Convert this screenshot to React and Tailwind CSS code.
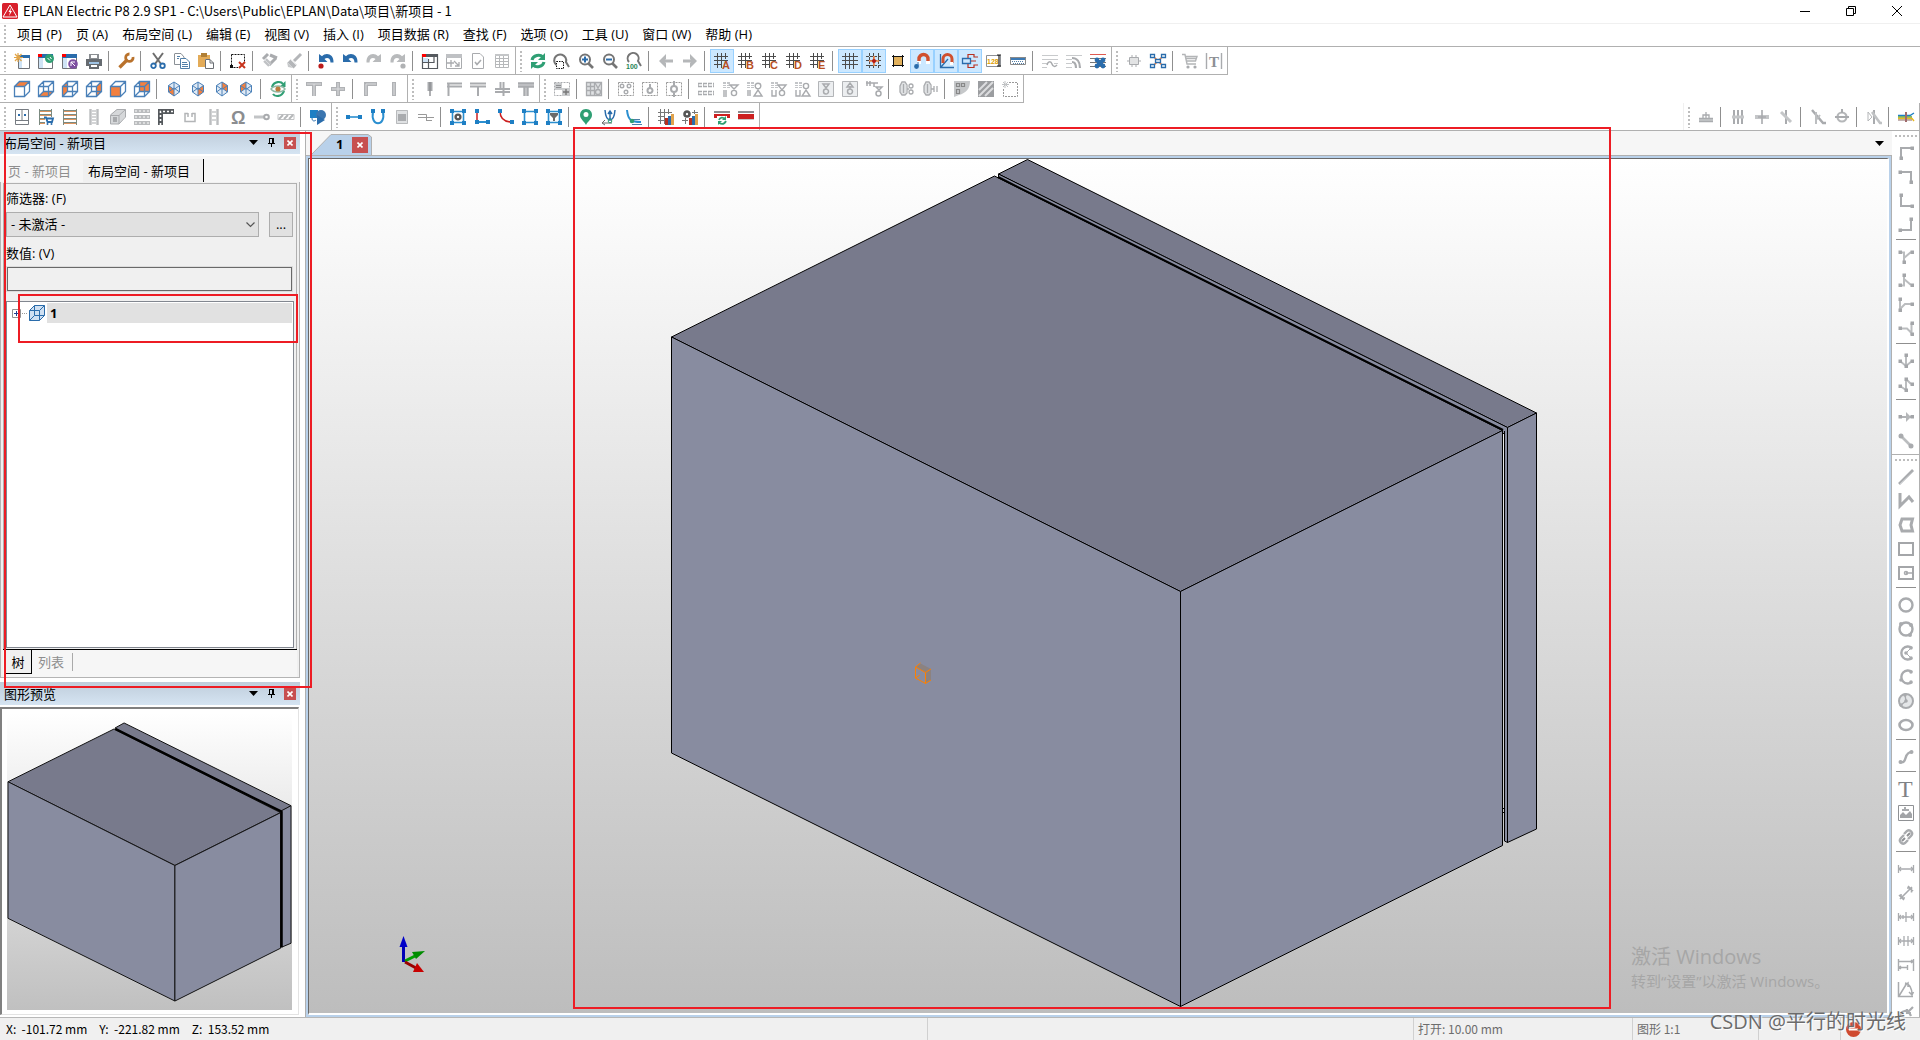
import React from 'react';

const GRAY = '#a9abae';
const DARK = '#6f7277';
const BLUE = '#2a6cab';
const SKY = '#1e7fc4';
const WIRE = '#4a80b8';
const ORANGE = '#f3803f';
const RED = '#cc2020';
const GREEN = '#2f9f74';
const RUST = '#b8501f';

// path helpers: f = filled, s = stroked, t = text
const f = (d, fill) => ({ d, fill });
const s = (d, stroke, strokeWidth = 1) => ({ d, stroke, strokeWidth, fill: 'none' });
const t = (text, x, y, size, fill, family = 'Liberation Sans') => ({ text, x, y, size, fill, family });
const box = (x, y, w, h) => `M${x} ${y}h${w}v${h}h${-w}Z`;
const circ = (x, y, r) => `M${x - r} ${y}a${r} ${r} 0 1 0 ${2 * r} 0a${r} ${r} 0 1 0 ${-2 * r} 0Z`;

const GRID = 'M0 3.5H14M0 7.5H14M0 11.5H8M3.5 0V15M7.5 0V15M11.5 0V6';
const letterGrid = (letter) => [s(GRID, '#4c4c4c'), t(letter, 8, 16, 11, RUST)];

const WIREFRAME = 'M.5 5.5H10.5V15.5H.5ZM5.5 .5H15.5V10.5H5.5ZM.5 5.5L5.5 .5M10.5 5.5L15.5 .5M10.5 15.5L15.5 10.5M.5 15.5L5.5 10.5';
const wireCube = (face) => [f(face, ORANGE), s(WIREFRAME, WIRE, 1.3)];
const isoCube = (face) => [
  f('M8 1L13.5 4.5V11L8 15L2.5 11V4.5Z', '#dfe9f4'),
  f(face, ORANGE),
  s('M8 1L13.5 4.5V11L8 15L2.5 11V4.5ZM2.5 4.5L8 8.5L13.5 4.5M8 8.5V15M8 1V7M2.5 11L8 7L13.5 11', WIRE),
];
const lens = [s(circ(7, 6.5, 5), '#757575', 2), s('M10.5 10.5L15 15', '#757575', 2.6)];
const nodes = (...pts) => f(pts.map(([x, y]) => box(x - 2, y - 2, 4, 4)).join(''), SKY);
const ends = (...pts) => f(pts.map(([x, y]) => box(x - 1.5, y - 1.5, 3.5, 3.5)).join(''), '#a4a6a9');
const frame = [s(box(2.5, 2.5, 11, 11), '#2b8fd0', 1.6), nodes([2, 2], [14, 2], [2, 14], [14, 14])];
const UNDO = 'M1 9V1L4 3.3C8 -1 16 1 15.5 9.5H12.5C12.5 5 9 4 6.5 6L9.5 9Z';
const REDO = 'M15 9V1L12 3.3C8 -1 0 1 .5 9.5H3.5C3.5 5 7 4 9.5 6L6.5 9Z';
const magnet = 'M5 10V6A4.5 4.5 0 0 1 14 6V10';
const ruler = (extra) => [s('M.5 4V12M15.5 4V12M1 8H15', GRAY, 1.3), s('M3 6L1 8L3 10M13 6L15 8L13 10', GRAY, 1.3), ...extra];
const arcC = s('M14 3A6.5 6.5 0 1 0 14 13', GRAY, 2.4);
const symbol = (top, bottom) => [f(box(1, 1, 7, 6), '#c3c5c8'), s('M1 3.5H8M1 5.5H8M4.5 1V7', '#fff'), s(top, GRAY, 1.4), s(bottom, GRAY, 1.4)];

const ICONS = {
  newPage: [s(box(4.5, 2.5, 11, 13), DARK), f(box(5, 2, 11, 3), BLUE), f(box(5, 5, 3, 10), '#cfe3f5'), s('M4 0V9M0 4.5H9M1 1L7.5 8M7.5 1L1 8', '#e2a446', 1.2)],
  openProject: [s(box(.5, 2.5, 14, 13), DARK), f(box(0, 1, 15, 4), BLUE), f(box(0, 1, 4, 3), 'red'), f(box(1, 5, 4, 10), '#cfe3f5'), f(circ(11.5, 5.5, 4.5), GREEN), s('M9.5 5L12 7.5M12 4L13.5 6', '#fff')],
  closeProject: [s(box(.5, 2.5, 14, 13), DARK), f(box(0, 1, 15, 4), BLUE), f(box(0, 1, 4, 3), 'red'), f(box(1, 5, 4, 10), '#cfe3f5'), f(circ(11, 11, 4.8), '#7d4fa0'), s('M9 13V9H13M9 9L13 13', '#fff')],
  print: [f('M0 6H16V13H0Z', '#666b70'), f(box(3, 1, 10, 5), '#8a8e92'), f(box(5, 2, 6, 3), '#fff'), f(box(3, 9, 10, 2), '#9fc3e3'), f(box(3, 11, 10, 5), '#666b70'), f(box(5, 12, 6, 2), '#fff')],
  wrench: [s('M1.5 14.5L9.5 6.5', '#b9722c', 3.4), s('M15 4A3.7 3.7 0 1 1 11.5 1', '#b9722c', 2.8)],
  cut: [s('M3 0L11 11M13 0L5 11', '#6e6e6e', 2), s(circ(3.5, 12.8, 2.3), BLUE, 1.8), s(circ(12.5, 12.8, 2.3), BLUE, 1.8)],
  copy: [f('M1 1H7L10 4V12H1Z', '#fff'), s('M1 .5H7L10 4V11.5H.5V.5', '#8a9096'), f('M6 5H12L15 8V15H6Z', '#fff'), s('M6.5 5.5H12L15.5 9V15.5H6.5ZM8 9.5H13M8 11.5H14M8 13.5H14M3 3.5H6M3 5.5H5', '#527fa8')],
  paste: [f(box(0, 2, 12, 12), '#e3ab58'), f(box(3, 0, 6, 4), '#b07f35'), f('M7 6H12L15 9V15H7Z', '#fff'), s('M7.5 6.5H12L15.5 10V15.5H7.5ZM12 6.5V10H15.5', '#6b6f74')],
  deleteMark: [{ ...s('M1.5 1.5H14.5V9M1.5 1.5V14.5H8', '#111'), strokeDasharray: '2 1' }, f(box(0, 12, 3, 3), '#111'), s('M9 9L15 15M15 9L9 15', '#c8341c', 2)],
  brushAll: [s('M1 6L6 1M8 2L15 5M7 12L14 5', GRAY, 3), s('M3 7L8 12', '#c0c2c5', 5), s('M2 6L8 12', '#d9dbdd')],
  brush: [s('M8 8L15 1', '#b4b6b9', 3), s('M3 8L9 14', '#b4b6b9', 4), s('M4 6L11 12', '#e4e5e7'), f('M1 9L7 15L2 14Z', '#c6c8ca')],
  undoList: [f(UNDO, BLUE), f(circ(3, 13, 2.6), '#bb1a1a')],
  undo: [f(UNDO, BLUE)],
  redo: [f(REDO, '#b8babc')],
  redoList: [f(REDO, '#b8babc'), f(circ(13, 13, 2.6), '#b0b2b4')],
  navigator: [s('M.5 1.5H15.5V15.5H.5ZM.5 9.5H6M6.5 6V9.5H12V4M6.5 9V15', '#55595e', 1.2), f(box(0, 1, 16, 3), '#55595e'), f(box(0, 1, 4, 3), 'red'), f(box(1, 5, 5, 4), '#cfe3f5')],
  navigatorOff: [s('M.5 1.5H15.5V15.5H.5Z', GRAY), f(box(0, 1, 16, 4), '#bfc1c4'), s('M5 7V14M1 10H8M8 8L13 13M13 9V13H9', GRAY, 1.3)],
  docCheck: [s('M2.5 .5H10L13.5 4V15.5H2.5Z', GRAY), s('M5 9L7 11.5L11 7', GRAY, 1.6)],
  sheet: [s('M1.5 1.5H14.5V14.5H1.5ZM1.5 5.5H14.5M1.5 8.5H14.5M1.5 11.5H14.5M5.5 1.5V14.5M9.5 1.5V14.5', '#b6b8ba'), f(box(1, 1, 14, 2), '#c4c6c8')],
  refresh: [s('M2 7C3 2 10 1 13 4M14 9C13 14 6 15 3 12', GREEN, 3), f('M15 0V7H8Z', GREEN), f('M1 16V9H8Z', GREEN)],
  zoomWindow: [s('M4 13A6 6 0 1 1 12 9L15 14', '#757575', 2), f(box(2, 8, 8, 8), '#fff'), { ...s(box(2.5, 8.5, 7, 7), '#111'), strokeDasharray: '1.5 1' }],
  zoomIn: [...lens, s('M4 6.5H10M7 3.5V9.5', BLUE, 2)],
  zoomOut: [...lens, s('M4 6.5H10', BLUE, 2)],
  zoomFull: [s('M3 9A5.5 5.5 0 1 1 12 8L15 13', '#757575', 2), t('100', 0, 16, 7, '#1f8455')],
  back: [s('M3 8H15', '#b5b7b9', 3), f('M1 8L8 1V6L6 8L8 10V15Z', '#b5b7b9')],
  forward: [s('M1 8H13', '#b5b7b9', 3), f('M15 8L8 1V6L10 8L8 10V15Z', '#b5b7b9')],
  gridA: letterGrid('A'),
  gridB: letterGrid('B'),
  gridC: letterGrid('C'),
  gridD: letterGrid('D'),
  gridE: letterGrid('E'),
  gridShow: [s('M0 3.5H16M0 7.5H16M0 11.5H16M3.5 0V16M7.5 0V16M11.5 0V16', '#4c4c4c')],
  gridSnap: [{ ...s('M0 3.5H16M0 7.5H16M0 12.5H16M3.5 0V16M7.5 0V16M12.5 0V16', '#4c4c4c'), strokeDasharray: '3 1' }, s('M8 3V13M3 8H13', ORANGE, 1.6), f(circ(8, 8, 2), '#b01818')],
  designMode: [f(box(4, 4, 8, 8), '#e2b15c'), s('M2 3.5H14M2 12.5H14M3.5 2V14M12.5 2V14', '#111')],
  objectSnap: [s(magnet, '#d04f2d', 3.4), f(box(3, 8, 4, 3), '#fff'), f(box(12, 8, 4, 3), '#fff'), s('M4 13V9', BLUE), f(circ(2.5, 13.5, 2.4), BLUE)],
  axisSnap: [s('M2.5 1V14.5H16M3 14L10 6', BLUE, 1.3), s(magnet, '#d04f2d', 3), f(box(12, 9, 3, 3), '#fff')],
  smartConnect: [s(box(.5, 5.5, 8, 5), BLUE, 1.3), s('M6 5V1.5H12M12 1V4H16M6 11V14.5H12M12 15V12H16M9 8H14', '#b83020', 1.2)],
  dimensionInput: [s(box(.5, 2.5, 14, 11), '#8d9095'), t('128', 1, 11, 7, '#e0a000'), s('M11 2H15M13 2V13M11 13H15', '#222', 1.2)],
  keyboard: [f(box(0, 4, 16, 3), '#3d7ab5'), s(box(.5, 4.5, 15, 7), '#8a8a8a'), { ...s('M2 8.5H14M3 10.5H14', '#527fa8'), strokeDasharray: '1 1' }],
  linesWave: [s('M0 2.5H16M0 6.5H16M0 10.5H5M12 10.5H16M0 14.5H5', '#c8cacc', 1.2), s('M5 12C6 8 9 8 10 11S13 14 15 12', GRAY, 1.5)],
  linesSignal: [s('M0 2.5H16M0 6.5H6M0 10.5H6M0 14.5H6', '#c8cacc', 1.2), s('M6 5C11 5 14 9 14 15M6 9C9 9 10 12 10 15', GRAY, 2.2)],
  linesPlug: [s('M0 1.5H16', '#e05a50'), s('M0 5.5H16M0 9.5H16M0 13.5H16', '#777'), f(circ(7, 7, 2.4) + circ(13, 13, 2.4), BLUE), f(circ(13, 7, 2.4) + circ(7, 13, 2.4), BLUE), f(box(7, 7, 6, 6), BLUE)],
  chip: [f(box(4, 4, 8, 8), '#e2e3e4'), s('M3.5 4.5H12.5V11.5H3.5ZM6 2V4M10 2V4M6 12V14M10 12V14M1 8H3M13 8H15', GRAY)],
  network: [s('M3 3L8 8L13 3M3 13L8 8L13 13', ORANGE, 1.5), f(box(5, 6, 6, 4), '#fff'), f(box(0, 1, 4, 4) + box(12, 1, 4, 4) + box(0, 11, 4, 4) + box(12, 11, 4, 4), '#fff'), s(box(5.5, 6.5, 5, 3) + box(.5, 1.5, 4, 3) + box(11.5, 1.5, 4, 3) + box(.5, 11.5, 4, 3) + box(11.5, 11.5, 4, 3), BLUE, 1.3)],
  cart: [s('M0 1.5H3L5 11H14M4 3.5H15L13.5 8H5M4 5.5H14', '#b3b5b7', 1.4), f(circ(6, 14, 1.6) + circ(13, 14, 1.6), GRAY)],
  textFrame: [s('M.5 0V16M15.5 0V16', GRAY, 1.4), t('T', 3, 14, 15, '#8d9095', 'Liberation Serif')],

  viewTop: [f('M.5 5.5L5.5 .5H15.5L10.5 5.5Z', ORANGE), s('M.5 5.5H10.5V15.5H.5ZM.5 5.5L5.5 .5H15.5V10.5L10.5 15.5M10.5 5.5L15.5 .5', WIRE, 1.3)],
  viewBottom: wireCube('M.5 15.5L5.5 10.5H15.5L10.5 15.5Z'),
  viewLeft: wireCube('M.5 5.5L5.5 .5V10.5L.5 15.5Z'),
  viewRight: wireCube('M10.5 5.5L15.5 .5V10.5L10.5 15.5Z'),
  viewFront: [f(box(.5, 5.5, 10, 10), ORANGE), s('M.5 5.5H10.5V15.5H.5ZM.5 5.5L5.5 .5H15.5V10.5L10.5 15.5M10.5 5.5L15.5 .5', WIRE, 1.3)],
  viewBack: wireCube(box(5.5, .5, 10, 10)),
  isoSW: isoCube('M2.5 4.5L8 8.5V15L2.5 11Z'),
  isoSE: isoCube('M8 8.5L13.5 4.5V11L8 15Z'),
  isoNE: isoCube('M8 1L13.5 4.5V11L8 7Z'),
  isoNW: isoCube('M8 1L2.5 4.5V11L8 7Z'),
  orbit: [s('M2 6C4 0 11 0 13 3M14 10C12 16 5 16 3 13', GREEN, 2.2), f('M15.5 0V6H9.5Z', GREEN), s('M1 8C4 4 12 4 15 8C12 12 4 12 1 8Z', '#8fb9a5', 1.4), f(circ(8, 8, 2.6), '#b97a3c')],
  profileT: [s('M0 3H16M8 3V15', '#b0b2b5', 4), s('M1 3H15M8 3V15', '#dddee0')],
  profilePlus: [s('M1 8H15M8 1V15', '#b0b2b5', 4), s('M2 8H14M8 2V14', '#dddee0')],
  profileL: [s('M4 15V3H15', '#b0b2b5', 4), s('M4 14V3H14', '#dddee0')],
  profileI: [s('M8 1V15', '#b0b2b5', 4), s('M8 2V14', '#dddee0')],
  barI: [s('M8 1V10', GRAY, 5), s('M8 1V15', '#8d8f92', 1.4)],
  barL: [s('M1 2.5H16M1 5.5H16M2.5 3V15', GRAY, 2)],
  barT: [s('M0 2.5H16M0 5.5H16M8 6V15', GRAY, 2)],
  barUp: [s('M1 8H16M1 11H16M6.5 1V8M9.5 1V15', GRAY, 2)],
  barDown: [s('M0 2.5H16M0 5.5H16M6.5 5V15M9.5 5V15', GRAY, 2.4)],
  boxAdd: [{ ...s(box(.5, 1.5, 15, 13), GRAY), strokeDasharray: '2 1' }, f(box(1, 2, 7, 7), '#c9cbcd'), s('M2 4.5H7M2 6.5H7', '#8f9194'), f(box(8, 7, 8, 8), '#c9cbcd'), s('M12 8V14M9 11H15', '#777', 1.4)],
  tableSymbol: [f(box(0, 1, 16, 13), '#dfe1e3'), s('M.5 1.5H15.5V14.5H.5ZM0 5.5H8M0 9.5H8M4.5 1V14M8.5 1V14', GRAY, 1.3), s('M9 2L12 7L15 2M12 7V9' + circ(12, 11, 2.5), GRAY, 1.3)],
  dashThree: [{ ...s(box(.5, 1.5, 15, 13), '#999'), strokeDasharray: '2 1' }, s(circ(4, 5, 1.8) + circ(11, 5, 1.8) + circ(8, 11, 1.8), GRAY, 1.4)],
  dashOne: [{ ...s(box(.5, 1.5, 15, 13), '#999'), strokeDasharray: '2 1' }, s('M8 3V7' + circ(8, 9.5, 2.5), GRAY, 2)],
  dashLink: [{ ...s(box(.5, 1.5, 15, 13), '#999'), strokeDasharray: '2 1' }, s('M8 0V5M8 11V16' + circ(8, 8, 3), GRAY, 2)],
  chain: [{ ...s('M0 2.5H16M0 5.5H16M0 10.5H16M0 13.5H16', GRAY, 1.4), strokeDasharray: '4 1' }, { ...s('M0 4H16M0 12H16', GRAY, 1.6), strokeDasharray: '1 4' }],
  symA: symbol('M8 4H16L12 8Z' + circ(12, 12, 2.6), 'M2 9V16M4 9V16'),
  symB: symbol('M2 9V15M4 9V15' + circ(12, 5, 2.8), 'M8 15H16L12 9Z'),
  symC: symbol('M8 4H16L12 9Z' + circ(12, 12, 2.6), 'M2 9V15H6V9'),
  symD: symbol('M2 9V15H6V9' + circ(12, 5, 2.6), 'M8 15H16L12 9Z'),
  panelDown: [f(box(0, 0, 16, 16), '#eceef0'), s(box(.5, .5, 15, 15), '#b3b5b8'), s('M5 3H11L8 7Z' + circ(8, 10.5, 2.5), GRAY, 1.5)],
  panelUp: [f(box(0, 0, 16, 16), '#eceef0'), s(box(.5, .5, 15, 15), '#b3b5b8'), s('M5 6H11L8 2ZM8 5V8' + circ(8, 10.5, 2.5), GRAY, 1.5)],
  sequence: [s('M0 2H12M1 0V5M4 0V5M8 2V6M10 6H16L13 9Z', GRAY, 1.5), s(circ(12.5, 12.5, 2.5), GRAY, 1.5)],
  plugTwo: [f('M4 2H8V14H4L2 11V5Z', '#e0e2e4'), s('M4 1H7L9 4V12L7 14H4L2 11V5ZM5.5 3V12M9 8H11' + circ(13, 5, 2) + circ(13, 11, 2), GRAY, 1.3)],
  plugOne: [f('M4 2H8V14H4L2 11V5Z', '#e0e2e4'), s('M4 1H7L9 4V12L7 14H4L2 11V5ZM5.5 3V12M9 8H12M12 5V11M15 5V11', GRAY, 1.3)],
  corner: [f('M0 0H16C16 8 12 12 5 14L0 16Z', '#c6c8ca'), s(box(2.5, 2.5, 3, 3) + box(7.5, 2.5, 3, 3) + box(2.5, 8.5, 3, 4), '#888', 1.2)],
  hatch: [f(box(0, 0, 16, 16), '#9b9da0'), { ...s('M1 9L9 1M1 15L15 1M7 15L15 7', '#dcdddf', 2) }],
  newArea: [{ ...s('M7 1.5H15.5V15.5H1.5V8', '#999'), strokeDasharray: '2 1' }, s('M3 0V7M0 3.5H7M1 1L6 6M6 1L1 6', '#c0c2c4')],

  cabinet: [s('M1.5 .5H14.5V15.5H1.5ZM8 .5V11M1.5 11.5H14.5', '#777c82'), f(box(4, 5, 2, 2) + box(10, 5, 2, 2), BLUE)],
  shelfCart: [s('M1.5 0V16M13.5 0V8M1 1.5H14M1 5.5H14M1 9.5H7M1 13.5H7', '#7b8a80'), s('M2 2.5H13M2 6.5H13M2 10.5H7M2 14.5H7', '#dd9460'), s('M6 8.5H8L9.5 13H14L15 9.5H9', BLUE, 1.8), f(circ(9.5, 15, 1) + circ(13.5, 15, 1), BLUE)],
  shelf: [s('M1.5 0V16M14.5 0V16M1 1.5H15M1 5.5H15M1 9.5H15M1 13.5H15', '#7b8a80'), s('M2 2.5H14M2 6.5H14M2 10.5H14M2 14.5H14', '#dd9460')],
  rail: [s('M4.5 0V16M11.5 0V16', '#bcbec0', 2.4), s('M6 2H10M6 5H10M6 8H10M6 11H10M6 14H10', GRAY)],
  block: [f('M0 6L7 0H15V8L9 15H0Z', '#d6d8da'), s('M.5 6.5H9V15H.5ZM.5 6L7 .5H15.5V8L9 15M9 6.5L15.5 .5', GRAY), f(box(3, 8, 4, 5), '#a7a9ac')],
  perforated: [f(box(0, 0, 16, 4), '#babcbe'), f(box(0, 6, 16, 4), '#babcbe'), f(box(0, 12, 16, 4), '#babcbe'), { ...s('M1 2H15M1 8H15M1 14H15', '#fff'), strokeDasharray: '2 2' }],
  angle: [s('M2.5 16V2.5H16', '#55595d', 5), { ...s('M2.5 16V2.5H16', '#fff', 1.6), strokeDasharray: '2 2' }],
  duct: [s('M6 4.5H3V12.5H13V4.5H10M6 4V8M10 4V8', '#b3b5b7', 1.5)],
  railB: [s('M4.5 0V16M11.5 0V16', '#bcbec0', 2.4), s('M6 3H10M6 7H10M6 11H10', GRAY)],
  omega: [t('Ω', 1, 15, 18, '#8b8d90')],
  terminal: [s('M0 8H10', '#c2c4c6', 3), s(circ(12.5, 8, 2.3), GRAY, 2)],
  busbar: [s('M0 5.5H16V10.5H0Z', '#c2c4c6'), s('M1 10L5 6M6 10L10 6M11 10L15 6', '#b5b7b9', 2)],
  shapes: [f(box(0, 1, 8, 8), SKY), f(circ(11, 6, 5), '#3c76b0'), f('M7 6L15 11L7 16Z', '#2a6cab'), s('M2 9C2 13 5 12 6 11', BLUE)],
  segment: [s('M2 8H14', '#2b8fd0', 1.6), nodes([2, 8], [14, 8])],
  curve: [s('M3 3C0 18 16 18 13 3', '#2b8fd0', 2), nodes([3, 2], [13, 2])],
  placeholder: [f(box(2, 1, 12, 14), '#dfe1e3'), s(box(2.5, 1.5, 11, 13), '#b8babc'), f(box(4, 5, 8, 7), GRAY)],
  stepLine: [s('M0 5.5H8.5V11M0 8.5H16M8 11.5H14', '#999')],
  frameGear: [...frame, s(circ(8, 8, 2.4), '#555', 2.4)],
  cornerNode: [s('M3 2V13H14', RED, 1.5), s('M3 13H14', '#2b8fd0', 2), nodes([3, 13], [14, 13], [3, 2])],
  curveNode: [s('M2 2C2 10 6 13 14 13', RED, 1.5), nodes([2, 2], [14, 13])],
  frameOnly: frame,
  frameFilter: [...frame, f('M4 4H12V6L9 9V12H7V9L4 6Z', '#6a6a6a')],
  pin: [f('M8 0C12 0 14 3 14 6C14 10 10 12 8 16C6 12 2 10 2 6C2 3 4 0 8 0ZM8 3A2.4 2.4 0 1 0 8 8A2.4 2.4 0 1 0 8 3Z', GREEN)],
  bendUp: [s('M1 14H10M3 11L0 14L3 16', '#6b6b6b'), s('M3 1C4 14 12 14 13 1M8 3V12M6 5L8 2L10 5', BLUE, 1.5), s(circ(8, 12, 1.8), GREEN)],
  bendFlat: [s('M1 1C2 12 6 13 15 13', '#2b8fd0', 2), s('M6 15.5H16M6 10.5H14', '#4b7fa7'), f(circ(6, 12, 2.3), GREEN)],
  gridEdit: [s('M0 3.5H14M0 7.5H7M0 11.5H7M2.5 0V15M6.5 0V15M10.5 0V5', '#777'), f(box(7, 9, 3, 7), '#b83020'), f(box(10, 7, 3, 9), '#2a6cab'), f(box(13, 5, 3, 11), '#e0a24c')],
  gearEdit: [s(circ(5, 5, 2.5), '#555', 2.6), s('M10 3.5H16M12.5 1V5M0 11.5H6M3.5 9V15', '#777'), f(box(7, 9, 3, 7), '#b83020'), f(box(10, 7, 3, 9), '#2a6cab'), f(box(13, 5, 3, 11), '#e0a24c')],
  cableRefresh: [f(box(0, 2, 16, 2), '#8b8d90'), f(box(0, 5, 16, 4), RED), f(box(3, 7, 10, 9), '#fff'), s('M5 11C6 8 9 8 11 10M12 12C10 16 7 15 5 14', GREEN, 1.8), f('M12 7V11H8ZM4 16V12H8Z', GREEN)],
  cable: [f(box(0, 2, 16, 2), '#8b8d90'), f(box(0, 5, 16, 5), RED), f(box(0, 10, 16, 1), '#c8c8c8')],

  socket: [f('M1 9H15V13H1Z', '#c6c8ca'), s('M5 9V6H11V9M8 3V10M1 9.5H15M1 12.5H15', GRAY, 1.3)],
  tripleLine: [s('M4 1V15M8 1V15M12 1V15', GRAY, 2), s('M2 8H14', '#c4c6c8', 3)],
  ringLine: [s('M1 8H15', '#c4c6c8', 4), s('M8 1V15M4 8H12', GRAY, 1.6)],
  slashLine: [s('M8 1V15', GRAY, 2), s('M3 3L13 13', '#c4c6c8', 3)],
  branch: [s('M2 1L13 14H16', GRAY, 2.4), s('M6 3V15M6 11L10 6', '#bcbec0', 2)],
  target: [s(circ(8, 8, 4.5), '#b5b7b9', 2.2), s('M1 8H15M8 0V4', GRAY, 2)],
  mirrorLine: [s('M2 3V12L6 8Z', '#b5b7b9'), s('M8 1V15', GRAY, 2), s('M6 3L14 14H16', '#c0c2c4', 2.6)],
  cableCross: [s('M0 6.5H12L16 4', '#1e7fc4', 1.4), s('M0 8H14', '#5aa02c', 1.4), s('M0 9.5H14L16 12', '#e8b820', 1.4), s('M0 11H14', '#8a6a6a'), s('M8 3V13', '#a06a6a', 2)],

  angA: [s('M3 14V3H14', GRAY, 2), ends([3, 13], [14, 3])],
  angB: [s('M2 3H13V14', GRAY, 2), ends([2, 3], [13, 13])],
  angC: [s('M3 2V13H14', GRAY, 2), ends([3, 2], [14, 13])],
  angD: [s('M13 2V13H2', GRAY, 2), ends([13, 2], [2, 13])],
  teeA: [s('M2 3.5H6V13M6 9L13 3', '#bbbdbf', 2), ends([2, 3], [14, 3], [6, 13])],
  teeB: [s('M2 12.5H6V2M6 6L13 12', '#bbbdbf', 2), ends([2, 12], [14, 12], [6, 2])],
  teeC: [s('M2 2V14M2 12L7 7H14', '#bbbdbf', 2), ends([2, 2], [2, 13], [14, 7])],
  teeD: [s('M2 7.5H9L13.5 12M13.5 2V14', '#bbbdbf', 2), ends([2, 7], [14, 2], [14, 13])],
  downA: [s('M8 2V13M2 8L8 13L14 8', '#bbbdbf', 2), ends([8, 2], [2, 8], [14, 8], [8, 13])],
  downB: [s('M8 2V13M2 9L8 13M8 2L13 7', '#bbbdbf', 2), ends([8, 2], [2, 9], [14, 7], [8, 13])],
  arrowPoint: [s('M2 8H14', GRAY, 1.8), f('M8 3L13 8L8 13Z', '#b5b7b9'), ends([2, 7.5], [14, 7.5])],
  diagonal: [s('M3 3L13 13', '#bbbdbf', 2.6), f(circ(3, 3, 2.5) + circ(13, 13, 2.5), GRAY)],
  line: [s('M1 15L15 1', GRAY, 2.6), s('M2 15L16 2', '#cfd1d3')],
  polyline: [s('M2 0V13L11 4L15 9', GRAY, 3)],
  polygon: [s('M4 2H14.5L13 8L14.5 14H4L2 8Z', GRAY, 3)],
  rect: [s(box(1, 2, 14, 12), '#a4a6a9', 2)],
  rectCenter: [s(box(1, 2, 14, 12), '#a4a6a9', 2), s('M8 8H14' + circ(8, 8, 1.5), GRAY, 1.6)],
  circle: [s(circ(8, 8, 6.5), GRAY, 2.4)],
  circle3: [s(circ(8, 8, 6.5), GRAY, 2.4), f(circ(3, 3, 2) + circ(13, 4, 2) + circ(12, 14, 2), GRAY)],
  arcCenter: [arcC, f(circ(13, 3, 1.8) + circ(13, 13, 1.8) + circ(8, 8, 1.8), GRAY), s('M8 8L13 13M8 8L12 4', GRAY)],
  arc: [arcC, f(circ(13, 3, 1.8) + circ(13, 13, 1.8) + circ(3, 11, 1.8), GRAY)],
  sector: [f(circ(8, 8, 6.5), '#e4e6e8'), s(circ(8, 8, 7), GRAY, 2), s('M7 2L8 8L3 12', GRAY, 1.4), f(circ(8, 8, 1.8) + circ(3, 12, 1.8) + circ(7, 2, 1.8), GRAY)],
  ellipse: [s('M1.5 8A6.5 5 0 1 0 14.5 8A6.5 5 0 1 0 1.5 8Z', GRAY, 2.6)],
  spline: [s('M2 13C10 15 5 3 14 3', GRAY, 2.4), f(circ(2.5, 13, 2) + circ(13.5, 3, 2), GRAY)],
  text: [{ ...t('T', 0, 16, 24, '#7f8286', 'Liberation Serif'), weight: 'normal' }],
  image: [s(box(.5, .5, 15, 15), '#8f9194'), f('M2 13V10L5 7L8 10L12 6L14 9V13Z', '#a2a4a7'), f('M4 4H6V2H8V4H11V6H4Z', GRAY)],
  link: [s('M7 9L4 12M9 7L12 4', '#8f9194', 2), s('M6 5L9 2C12 0 16 4 13 7L10 10M10 11L7 14C4 16 0 12 3 9L6 6', GRAY, 2.4)],
  dimLinear: ruler([]),
  dimAligned: [s('M2 14L14 2M1 10L6 15M10 1L15 6M9 3H13.5V7.5M3 9V13H7', GRAY, 1.6)],
  dimContinued: ruler([s('M8 3V13M5 6V10', GRAY, 1.3)]),
  dimBaseline: ruler([s('M6 3V13M10 3V13', GRAY, 1.3)]),
  dimStep: [s('M.5 2V14M15.5 2V14M1 4.5H15M1 10.5H9M9.5 8V13M3 9L1 10.5L3 12M13 3L15 4.5L13 6', GRAY, 1.4)],
  dimAngle: [s('M.5 1V15.5H15M1 15L9 2M7 2C12 3 14 7 14 14M7 4L10 2L10 6M11 11L14 14L15.5 11', GRAY, 1.5)],
  dimRadius: [s('M1 13C3 4 10 4 13 11M15 2L9 8M9 4V8H13', GRAY, 2.2)],
};

function Icon({ name }) {
  return (
    <svg width="16" height="16" viewBox="0 0 16 16" className="block shrink-0 overflow-visible" aria-hidden="true">
      {ICONS[name].map((p, i) =>
        p.text ? (
          <text key={i} x={p.x} y={p.y} fontSize={p.size} fill={p.fill} fontFamily={p.family} fontWeight={p.weight || 'bold'}>
            {p.text}
          </text>
        ) : (
          <path key={i} {...p} fillRule="evenodd" />
        )
      )}
    </svg>
  );
}

const ROW_1 = [
  'newPage openProject closeProject print | wrench | cut copy paste | deleteMark | brushAll brush | undoList undo redo redoList | navigator navigatorOff docCheck sheet',
  'refresh zoomWindow zoomIn zoomOut zoomFull | back forward | gridA* gridB gridC gridD gridE | gridShow* gridSnap* designMode objectSnap* axisSnap* smartConnect* dimensionInput keyboard | linesWave linesSignal linesPlug',
  'chip network | cart textFrame',
];
const ROW_2 = [
  'viewTop viewBottom viewLeft viewRight viewFront viewBack | isoSW isoSE isoNE isoNW | orbit',
  'profileT profilePlus | profileL profileI',
  'barI barL barT barUp barDown',
  'boxAdd | tableSymbol | dashThree dashOne dashLink | chain symA symB symC symD panelDown panelUp sequence | plugTwo plugOne | corner hatch newArea',
];
const ROW_3 = [
  'cabinet shelfCart shelf rail block perforated angle duct railB omega terminal busbar | shapes',
  'segment curve placeholder stepLine | frameGear cornerNode curveNode frameOnly frameFilter | pin bendUp bendFlat | gridEdit gearEdit | cableRefresh cable',
];
const ROW_3_RIGHT = 'socket | tripleLine ringLine slashLine | branch target | mirrorLine | cableCross';
const SIDE = [
  'angA angB angC angD | teeA teeB teeC teeD | downA downB | arrowPoint diagonal',
  'line polyline polygon rect rectCenter | circle circle3 arcCenter arc sector ellipse | spline | text image link | dimLinear dimAligned dimContinued dimBaseline dimStep dimAngle dimRadius',
];

function Tool({ item }) {
  const active = item.endsWith('*');
  const name = item.replace('*', '');
  return (
    <button
      type="button"
      aria-label={name}
      className={`flex size-6 shrink-0 items-center justify-center ${active ? 'border border-[#99d1ff] bg-[#cce8ff]' : ''}`}
    >
      <Icon name={name} />
    </button>
  );
}

function Toolbar({ items }) {
  return (
    <div role="toolbar" className="flex h-7 shrink-0 border-r border-b border-[#b0b0b0] bg-white pt-[2px] pr-[1px]">
      <div className="w-[10px] shrink-0 py-[2px] pl-1">
        <div className="h-full w-[2px] bg-[repeating-linear-gradient(180deg,#bdbdbd_0_2px,transparent_2px_4px)]" />
      </div>
      {items.split(' ').map((item, i) =>
        item === '|' ? (
          <div key={i} className="w-2 shrink-0 py-[2px] pl-[2px]">
            <div className="h-5 w-px bg-[#8f8f8f]" />
          </div>
        ) : (
          <Tool key={i} item={item} />
        )
      )}
    </div>
  );
}

function SideToolbar({ items }) {
  return (
    <div role="toolbar" className="flex w-full shrink-0 flex-col border-b border-[#b0b0b0] pb-[1px] pl-[2px]">
      <div className="h-[10px] shrink-0 px-[1px] pt-1">
        <div className="h-[2px] w-[22px] bg-[repeating-linear-gradient(90deg,#bdbdbd_0_2px,transparent_2px_4px)]" />
      </div>
      {items.split(' ').map((item, i) =>
        item === '|' ? (
          <div key={i} className="h-2 shrink-0 px-[2px] pt-[2px]">
            <div className="h-px w-5 bg-[#8f8f8f]" />
          </div>
        ) : (
          <Tool key={i} item={item} />
        )
      )}
    </div>
  );
}

function CloseBox({ label, className }) {
  return (
    <button type="button" aria-label={label} className={`flex items-center justify-center bg-[#c75050] ${className}`}>
      <svg width="6" height="6" viewBox="0 0 6 6">
        <path d="M.5 .5L5.5 5.5M5.5 .5L.5 5.5" stroke="#fff" strokeWidth="1.6" />
      </svg>
    </button>
  );
}

function Triangle() {
  return (
    <svg width="9" height="5" viewBox="0 0 9 5">
      <path d="M0 0H9L4.5 5Z" />
    </svg>
  );
}

function DockTitle({ children }) {
  return (
    <div className="flex h-[23px] shrink-0 items-center bg-linear-to-b from-[#bfcddb] to-[#d5e4f2] pr-1 pl-1">
      <h2 className="grow leading-5">{children}</h2>
      <button type="button" aria-label="菜单" className="mr-[10px]">
        <Triangle />
      </button>
      <button type="button" aria-label="固定" className="mr-[9px]">
        <svg width="7" height="9" viewBox="0 0 7 9">
          <path d="M1.500 0V5M1 .5H5M0 5.500H7M3.500 6V9" stroke="#000" fill="none" />
          <path d="M4 0H6V5H4Z" />
        </svg>
      </button>
      <CloseBox label="关闭" className="size-3" />
    </div>
  );
}

const MENUS = ['项目 (P)', '页 (A)', '布局空间 (L)', '编辑 (E)', '视图 (V)', '插入 (I)', '项目数据 (R)', '查找 (F)', '选项 (O)', '工具 (U)', '窗口 (W)', '帮助 (H)'];

function TitleBar() {
  return (
    <header className="flex h-6 shrink-0 items-center border-b border-[#f0f0f0] pb-[2px] pl-[2px]">
      <svg width="16" height="16" viewBox="0 0 16 16" className="mr-[5px]">
        <rect width="16" height="16" rx="1.5" fill="#d8202c" />
        <path d="M8 2L15 14H1Z" fill="none" stroke="#fff" />
        <path d="M9 4.5L6.5 9H8L7 13L10 8H8.5Z" fill="#fff" />
      </svg>
      <h1 className="grow font-['Noto_Sans_CJK_SC',sans-serif] leading-5">EPLAN Electric P8 2.9 SP1 - C:\Users\Public\EPLAN\Data\项目\新项目 - 1</h1>
      <button type="button" aria-label="最小化" className="flex w-[46px] justify-center">
        <svg width="10" height="10" viewBox="0 0 10 10"><path d="M0 5.5H10" stroke="#000" /></svg>
      </button>
      <button type="button" aria-label="还原" className="flex w-[46px] justify-center">
        <svg width="10" height="10" viewBox="0 0 10 10"><path d="M.5 2.5H7.500V9.500H.5ZM2.500 2V.5H9.500V7.500H8" stroke="#000" fill="none" /></svg>
      </button>
      <button type="button" aria-label="关闭" className="flex w-[46px] justify-center">
        <svg width="10" height="10" viewBox="0 0 10 10"><path d="M0 0L10 10M10 0L0 10" stroke="#000" /></svg>
      </button>
    </header>
  );
}

function MenuBar() {
  return (
    <nav className="flex h-[22px] shrink-0 items-center gap-[14px] pl-1">
      <div className="-mr-[3px] h-5 w-[2px] bg-[repeating-linear-gradient(180deg,#bdbdbd_0_2px,transparent_2px_4px)]" />
      {MENUS.map((m) => (
        <button key={m} type="button" className="whitespace-nowrap">{m}</button>
      ))}
    </nav>
  );
}

function LayoutDock() {
  return (
    <section className="flex min-h-0 grow flex-col">
      <DockTitle>布局空间 - 新项目</DockTitle>
      <div role="tablist" className="mt-[2px] flex h-[26px] shrink-0 bg-[#f6f6f6] pt-[3px]">
        <button type="button" role="tab" className="w-[83px] pl-2 text-left leading-5 whitespace-nowrap text-[#8e8e8e]">页 - 新项目</button>
        <button type="button" role="tab" aria-selected="true" className="w-[121px] border-r border-black bg-[#f0f0f0] pl-[5px] text-left leading-5 whitespace-nowrap">布局空间 - 新项目</button>
      </div>
      <div className="flex min-h-0 grow flex-col border-x border-b border-[#b4b4b4] bg-[#f0f0f0] px-[2px] pt-[1px]">
        <div className="flex min-h-0 grow flex-col border-x border-t border-[#b0b0b0] pr-[2px] pb-[1px] pl-[2px]">
          <label htmlFor="filter" className="flex h-7 shrink-0 items-center pt-[2px]">筛选器: (F)</label>
          <div className="flex h-[25px] shrink-0 gap-[10px] pr-[1px]">
            <div className="relative grow">
              <select id="filter" className="size-full appearance-none border border-[#adadad] bg-[#e1e1e1] pl-1">
                <option>- 未激活 -</option>
              </select>
              <svg width="9" height="6" viewBox="0 0 9 6" className="pointer-events-none absolute top-[10px] right-1">
                <path d="M.5 .5L4.5 4.5L8.5 .5" fill="none" stroke="#555" strokeWidth="1.2" />
              </svg>
            </div>
            <button type="button" className="w-6 border border-[#adadad] bg-[#e1e1e1]">...</button>
          </div>
          <label htmlFor="value" className="flex h-[30px] shrink-0 items-center pt-[3px]">数值: (V)</label>
          <input id="value" className="mr-[2px] ml-[1px] h-6 shrink-0 border border-[#696969] bg-[#f0f0f0] px-1 outline-1 outline-[#dcdcdc]" />
          <div role="tree" className="mt-[10px] flex min-h-0 grow flex-col border border-[#828790] bg-white p-[1px]">
            <div role="treeitem" className="flex h-5 shrink-0 items-center pl-1">
              <svg width="9" height="9" viewBox="0 0 9 9">
                <path d="M.5 .5H8.5V8.5H.5Z" fill="#fff" stroke="#919191" />
                <path d="M2 4.5H7M4.5 2V7" stroke="#23408f" />
              </svg>
              <div className="mr-[2px] ml-[1px] w-[5px] border-t border-dotted border-[#999]" />
              <svg width="16" height="16" viewBox="0 0 16 16">
                <path d="M.5 5.5L5.5 .5H15.5V10.5L10.5 15.5H.5Z" fill="#cfe0f2" />
                <path d={WIREFRAME} fill="none" stroke="#2a6cab" />
              </svg>
              <span className="ml-[2px] grow self-stretch bg-[#e1e1e1] pl-[3px] leading-5 font-bold">1</span>
            </div>
          </div>
        </div>
        <div role="tablist" className="flex h-7 shrink-0 items-start border-t border-black bg-[#f6f6f6] pl-[2px]">
          <button type="button" role="tab" aria-selected="true" className="h-6 w-[27px] border-r border-b border-black bg-[#f0f0f0] text-center leading-5">树</button>
          <button type="button" role="tab" className="mt-[3px] h-[18px] w-[41px] border-r border-[#aaa] pr-[2px] text-center leading-4 whitespace-nowrap text-[#8e8e8e]">列表</button>
        </div>
      </div>
    </section>
  );
}

function PreviewDock() {
  return (
    <section className="mt-1 shrink-0">
      <DockTitle>图形预览</DockTitle>
      <div className="mt-[2px] mr-[1px] flex h-[308px] border border-t-2 border-l-2 border-[#e3e3e3] border-t-[#808080] border-l-[#808080] bg-white pt-1 pr-[6px] pb-1 pl-[5px]">
        <svg viewBox="0 0 285 298" className="size-full bg-linear-to-b from-white to-[#c0c0c0]" preserveAspectRatio="xMidYMax meet" aria-label="3D">
          <g stroke="#111" strokeLinejoin="round">
            <path d="M108 15L117 10L284.500 93L275 99Z" fill="#787a8c" />
            <path d="M275 98L284.500 93V231L275 235Z" fill="#888ca0" />
            <path d="M.5 69L107 16L274 100L168 153Z" fill="#787a8c" />
            <path d="M.5 69L168 153V289L.5 206Z" fill="#888ca0" />
            <path d="M168 153L274 100V236L168 289Z" fill="#888ca0" />
            <path d="M108 16L275 99V235" fill="none" stroke="#000" strokeWidth="2.4" />
          </g>
        </svg>
      </div>
    </section>
  );
}

function Viewport() {
  return (
    <svg viewBox="0 0 1578 854" className="absolute inset-0 size-full" preserveAspectRatio="xMidYMid meet" aria-label="3D">
      <g stroke="#000" strokeLinejoin="round">
        <path d="M689.5 15L718.5 .5L1227.5 254L1198.5 268.5Z" fill="#787a8c" />
        <path d="M689.5 15V19L1195.5 275V682L1198.5 683.5V268.5Z" fill="#888ca0" />
        <path d="M1198.5 268.5L1227.5 254V670L1198.5 683.5Z" fill="#888ca0" />
        <path d="M362.5 178L685.5 17L1193.5 271.5L871.5 432.5Z" fill="#787a8c" />
        <path d="M362.5 178L871.5 432.5V847.5L362.5 594Z" fill="#888ca0" />
        <path d="M871.5 432.5L1193.5 271.5V686.5L871.5 847.5Z" fill="#888ca0" />
        <path d="M689 18L1194 271" fill="none" strokeWidth="2" />
        <path d="M1195.5 272V678M1193 649.5H1196M1193 653.5H1196" fill="none" />
      </g>
      <path d="M606.5 508L611.5 504.5L622 510V521L616.5 524.5V513.5Z" fill="#8c8280" />
      <path d="M606.5 508L616.5 513.5V524.5L606.5 519ZM606.5 508L611.5 504M616.5 513.5L622 510M616.5 524.5L622 521M606.5 519L611 516" stroke="#ff8000" fill="none" />
      <path d="M94.5 803V782" stroke="#0000b8" strokeWidth="3" />
      <path d="M94.5 777L98.5 788H90.5Z" fill="#0000c8" />
      <path d="M96 802L108 796" stroke="#00a000" strokeWidth="3" />
      <path d="M103 793L116 792L107 800Z" fill="#008c00" />
      <path d="M96 803L107 809" stroke="#900" strokeWidth="3" />
      <path d="M108 804L115 813H104Z" fill="#c80000" />
    </svg>
  );
}

function DocumentArea() {
  return (
    <main className="ml-[5px] flex min-w-0 grow flex-col border-l border-[#b0b0b0]">
      <div role="tablist" className="flex h-6 shrink-0 items-center bg-[#f6f6f6] pr-2 pl-[5px]">
        <div className="relative flex h-full w-[61px] items-center pt-1 pl-[25px]">
          <svg width="61" height="21" viewBox="0 0 61 21" className="absolute bottom-0 left-0">
            <path d="M0 21L20 .5H57L60.5 3V21" fill="#b9d1ea" stroke="#b0b0b0" />
          </svg>
          <button type="button" role="tab" aria-selected="true" className="relative w-4 text-left font-bold">1</button>
          <CloseBox label="关闭标签" className="relative size-4" />
        </div>
        <button type="button" aria-label="标签列表" className="ml-auto">
          <Triangle />
        </button>
      </div>
      <div className="flex min-h-0 grow border-t border-r border-[#b0b0b0]">
        <div className="flex grow border-2 border-[#b9d1ea]">
          <div className="relative grow border-t border-r-2 border-b-2 border-l border-white border-t-[#696969] border-l-[#696969] bg-linear-to-b from-white to-[#bdbdbd]">
            <Viewport />
            <div className="absolute right-[60px] bottom-[22px] w-[196px] whitespace-nowrap text-[#a6a6a6]">
              <p className="text-xl leading-7">激活 Windows</p>
              <p className="text-[15px] leading-5">转到“设置”以激活 Windows。</p>
            </div>
          </div>
        </div>
      </div>
    </main>
  );
}

function StatusBar() {
  return (
    <footer className="flex h-[23px] shrink-0 items-stretch border-t border-[#b8b8b8] bg-[#f0f0f0] font-['Noto_Sans_CJK_SC',sans-serif] text-xs leading-[22px] whitespace-nowrap">
      <div className="flex grow gap-3 pl-[6px]">
        <span>X:&nbsp; -101.72 mm</span>
        <span>Y:&nbsp; -221.82 mm</span>
        <span>Z:&nbsp; 153.52 mm</span>
      </div>
      <div className="w-[486px] border-l border-[#d0d0d0]" />
      <div className="w-[219px] border-l border-[#d0d0d0] pl-1 text-[#6d6d6d]">打开: 10.00 mm</div>
      <div className="w-[126px] border-l border-[#d0d0d0] pl-1 text-[#6d6d6d]">图形 1:1</div>
      <div className="w-[82px] border-l border-[#d0d0d0]" />
      <div className="flex w-20 items-center border-l border-[#d0d0d0] pl-[5px]">
        <svg width="15" height="15" viewBox="0 0 15 15">
          <circle cx="7.5" cy="7.5" r="7.5" fill="#cf4a30" />
          <path d="M3 7.5H12" stroke="#fff" strokeWidth="2" />
        </svg>
      </div>
    </footer>
  );
}

// red callout frames drawn on top of the window
function Callouts() {
  return (
    <>
      <div className="pointer-events-none absolute top-[132px] bottom-[352px] left-1 w-[308px] border-2 border-[#ed1c24]" />
      <div className="pointer-events-none absolute top-[294px] left-[18px] h-[49px] w-[280px] border-2 border-[#ed1c24]" />
      <div className="pointer-events-none absolute top-[127px] right-[309px] bottom-[31px] left-[573px] border-2 border-[#ed1c24]" />
    </>
  );
}

export default function App() {
  return (
    <div className="relative flex h-screen flex-col overflow-hidden bg-white font-['Open_Sans','Noto_Sans_CJK_SC',sans-serif] text-[13px] text-black">
      <TitleBar />
      <MenuBar />
      <div className="flex shrink-0 flex-col border-t border-[#b0b0b0]">
        <div className="flex">{ROW_1.map((r) => <Toolbar key={r} items={r} />)}</div>
        <div className="flex">{ROW_2.map((r) => <Toolbar key={r} items={r} />)}</div>
        <div className="flex h-7 justify-between border-b border-[#b0b0b0]">
          <div className="flex">{ROW_3.map((r) => <Toolbar key={r} items={r} />)}</div>
          <div className="border-l border-[#f0f0f0]">
            <Toolbar items={ROW_3_RIGHT} />
          </div>
        </div>
      </div>
      <div className="flex min-h-0 grow">
        <aside className="flex w-[300px] shrink-0 flex-col pb-[2px]">
          <LayoutDock />
          <PreviewDock />
        </aside>
        <DocumentArea />
        <aside className="flex w-7 shrink-0 flex-col overflow-hidden border-r border-[#b0b0b0]">
          {SIDE.map((r) => <SideToolbar key={r} items={r} />)}
        </aside>
      </div>
      <StatusBar />
      <Callouts />
      <p className="pointer-events-none absolute right-[14px] bottom-1 text-xl leading-7 whitespace-nowrap text-[#6b6b6b] [text-shadow:1px_1px_1px_#fff]">
        CSDN @平行的时光线
      </p>
    </div>
  );
}
